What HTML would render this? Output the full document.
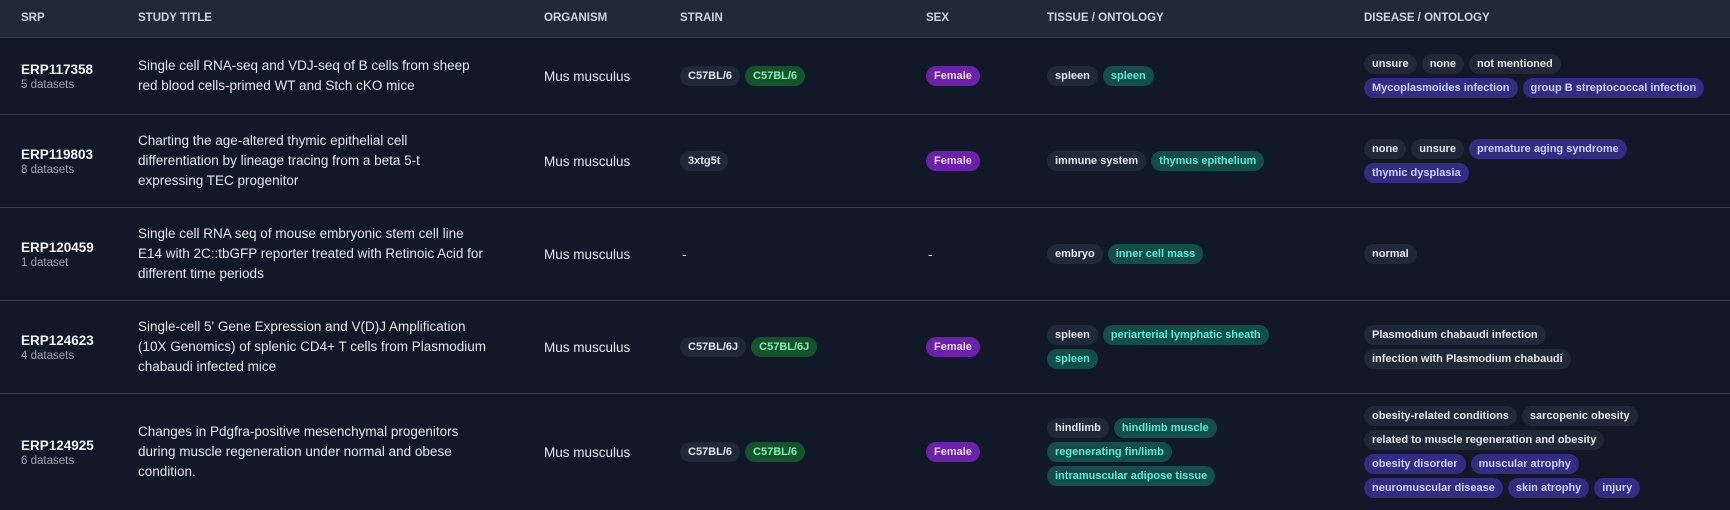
<!DOCTYPE html>
<html><head><meta charset="utf-8"><style>
*{margin:0;padding:0;box-sizing:border-box}
body{width:1730px;height:510px;background:#111827;font-family:"Liberation Sans",sans-serif;color:#e5e7eb;overflow:hidden;position:relative}
.hdr{position:absolute;left:0;top:0;width:1730px;height:38px;background:#1f2937;border-bottom:1px solid #374151}
.h{position:absolute;top:12px;font-size:11.5px;font-weight:bold;color:#cbd5e1}
.row{position:absolute;left:0;width:1730px;border-bottom:1px solid #374151}
.c{position:absolute;top:0;bottom:0;display:flex;flex-direction:column;justify-content:center}
.srp b{font-size:13.5px;color:#f3f4f6}
.srp span{font-size:11.5px;color:#9ca3af;margin-top:2px}
.t{font-size:13.5px;line-height:20px;color:#e5e7eb;white-space:nowrap}
.o{font-size:13.5px}
.p{display:flex;flex-wrap:wrap;gap:0 5px;width:440px}
.br{flex-basis:100%;height:0}
.g{display:inline-block;height:20px;line-height:20px;margin:2px 0;padding:0 8px;border-radius:10px;font-size:11px;font-weight:bold;white-space:nowrap}
.n{background:#1f2937;color:#e5e7eb}
.gr{background:#14532d;color:#86efac}
.te{background:#134e4a;color:#5eead4}
.pu{background:#6b21a8;color:#e9d5ff}
.in{background:#312e81;color:#c7d2fe}
</style></head><body>
<div class="hdr">
<div class="h" style="left:21px">SRP</div>
<div class="h" style="left:138px">STUDY TITLE</div>
<div class="h" style="left:544px">ORGANISM</div>
<div class="h" style="left:680px">STRAIN</div>
<div class="h" style="left:926px">SEX</div>
<div class="h" style="left:1047px">TISSUE / ONTOLOGY</div>
<div class="h" style="left:1364px">DISEASE / ONTOLOGY</div>
</div>

<div class="row" style="top:38px;height:77px">
<div class="c srp" style="left:21px"><b>ERP117358</b><span>5 datasets</span></div>
<div class="c t" style="left:138px">Single cell RNA-seq and VDJ-seq of B cells from sheep<br>red blood cells-primed WT and Stch cKO mice</div>
<div class="c o" style="left:544px">Mus musculus</div>
<div class="c" style="left:680px"><div class="p"><span class="g n">C57BL/6</span><span class="g gr">C57BL/6</span></div></div>
<div class="c" style="left:926px"><div class="p"><span class="g pu">Female</span></div></div>
<div class="c" style="left:1047px"><div class="p"><span class="g n">spleen</span><span class="g te">spleen</span></div></div>
<div class="c" style="left:1364px"><div class="p"><span class="g n">unsure</span><span class="g n">none</span><span class="g n">not mentioned</span><div class="br"></div><span class="g in">Mycoplasmoides infection</span><span class="g in">group B streptococcal infection</span></div></div>
</div>

<div class="row" style="top:115px;height:93px">
<div class="c srp" style="left:21px"><b>ERP119803</b><span>8 datasets</span></div>
<div class="c t" style="left:138px">Charting the age-altered thymic epithelial cell<br>differentiation by lineage tracing from a beta 5-t<br>expressing TEC progenitor</div>
<div class="c o" style="left:544px">Mus musculus</div>
<div class="c" style="left:680px"><div class="p"><span class="g n">3xtg5t</span></div></div>
<div class="c" style="left:926px"><div class="p"><span class="g pu">Female</span></div></div>
<div class="c" style="left:1047px"><div class="p"><span class="g n">immune system</span><span class="g te">thymus epithelium</span></div></div>
<div class="c" style="left:1364px"><div class="p"><span class="g n">none</span><span class="g n">unsure</span><span class="g in">premature aging syndrome</span><div class="br"></div><span class="g in">thymic dysplasia</span></div></div>
</div>

<div class="row" style="top:208px;height:93px">
<div class="c srp" style="left:21px"><b>ERP120459</b><span>1 dataset</span></div>
<div class="c t" style="left:138px">Single cell RNA seq of mouse embryonic stem cell line<br>E14 with 2C::tbGFP reporter treated with Retinoic Acid for<br>different time periods</div>
<div class="c o" style="left:544px">Mus musculus</div>
<div class="c o" style="left:682px">-</div>
<div class="c o" style="left:928px">-</div>
<div class="c" style="left:1047px"><div class="p"><span class="g n">embryo</span><span class="g te">inner cell mass</span></div></div>
<div class="c" style="left:1364px"><div class="p"><span class="g n">normal</span></div></div>
</div>

<div class="row" style="top:301px;height:93px">
<div class="c srp" style="left:21px"><b>ERP124623</b><span>4 datasets</span></div>
<div class="c t" style="left:138px">Single-cell 5' Gene Expression and V(D)J Amplification<br>(10X Genomics) of splenic CD4+ T cells from Plasmodium<br>chabaudi infected mice</div>
<div class="c o" style="left:544px">Mus musculus</div>
<div class="c" style="left:680px"><div class="p"><span class="g n">C57BL/6J</span><span class="g gr">C57BL/6J</span></div></div>
<div class="c" style="left:926px"><div class="p"><span class="g pu">Female</span></div></div>
<div class="c" style="left:1047px"><div class="p"><span class="g n">spleen</span><span class="g te">periarterial lymphatic sheath</span><div class="br"></div><span class="g te">spleen</span></div></div>
<div class="c" style="left:1364px"><div class="p"><span class="g n">Plasmodium chabaudi infection</span><div class="br"></div><span class="g n">infection with Plasmodium chabaudi</span></div></div>
</div>

<div class="row" style="top:394px;height:116px;border-bottom:none">
<div class="c srp" style="left:21px"><b>ERP124925</b><span>6 datasets</span></div>
<div class="c t" style="left:138px">Changes in Pdgfra-positive mesenchymal progenitors<br>during muscle regeneration under normal and obese<br>condition.</div>
<div class="c o" style="left:544px">Mus musculus</div>
<div class="c" style="left:680px"><div class="p"><span class="g n">C57BL/6</span><span class="g gr">C57BL/6</span></div></div>
<div class="c" style="left:926px"><div class="p"><span class="g pu">Female</span></div></div>
<div class="c" style="left:1047px"><div class="p"><span class="g n">hindlimb</span><span class="g te">hindlimb muscle</span><div class="br"></div><span class="g te">regenerating fin/limb</span><div class="br"></div><span class="g te">intramuscular adipose tissue</span></div></div>
<div class="c" style="left:1364px"><div class="p"><span class="g n">obesity-related conditions</span><span class="g n">sarcopenic obesity</span><div class="br"></div><span class="g n">related to muscle regeneration and obesity</span><div class="br"></div><span class="g in">obesity disorder</span><span class="g in">muscular atrophy</span><div class="br"></div><span class="g in">neuromuscular disease</span><span class="g in">skin atrophy</span><span class="g in">injury</span></div></div>
</div>
</body></html>
